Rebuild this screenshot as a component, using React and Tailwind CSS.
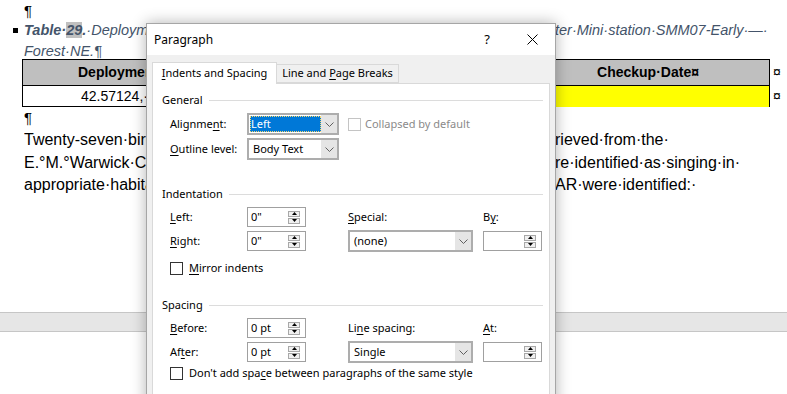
import React from 'react';

// underline the access key letter
const AK = ({ text, k }) => (
  <span>
    {text.slice(0, k)}
    <span className="underline underline-offset-2">{text[k]}</span>
    {text.slice(k + 1)}
  </span>
);

const Chevron = () => (
  <svg width="9" height="5" viewBox="0 0 9 5">
    <path d="M0.5 0.5 L4.5 4.5 L8.5 0.5" fill="none" stroke="#606060" strokeWidth="1" />
  </svg>
);

const Select = ({ value, width, focused }) => (
  <div className={`flex h-[22px] border-2 border-[#adadad] bg-white ${width}`}>
    <div className="flex flex-1 items-center pl-px">
      {focused ? (
        <div className="flex h-[16px] w-full items-center bg-[#0078d7] pl-[1px] text-white outline-1 outline-dotted outline-[#f5d76e] -outline-offset-1">
          {value}
        </div>
      ) : (
        <span className="pl-[3px]">{value}</span>
      )}
    </div>
    <div className="flex w-[16px] items-center justify-center bg-[#e5e5e5]">
      <Chevron />
    </div>
  </div>
);

const Tri = ({ up }) => (
  <svg width="5" height="3" viewBox="0 0 5 3">
    <path d={up ? 'M0 3 L2.5 0 L5 3 Z' : 'M0 0 L2.5 3 L5 0 Z'} fill="#000" />
  </svg>
);

const Spinner = ({ value }) => (
  <div className="flex h-[20px] w-[59px] items-center border border-[#a0a0a0] bg-white">
    <span className="flex-1 pl-[3px]">{value}</span>
    <div className="mr-[5px] flex w-[12px] flex-col gap-px">
      <div className="flex h-[6px] items-center justify-center border border-[#a8a8a8] bg-[#f0f0f0]">
        <Tri up />
      </div>
      <div className="flex h-[6px] items-center justify-center border border-[#a8a8a8] bg-[#f0f0f0]">
        <Tri />
      </div>
    </div>
  </div>
);

const Check = ({ disabled }) => (
  <div
    className={`h-[13px] w-[13px] border bg-white ${disabled ? 'border-[#c4c4c4]' : 'border-[#333333]'}`}
  />
);

const Group = ({ title, className }) => (
  <div className={`ml-[9px] mr-[6px] flex h-[16px] items-center ${className}`}>
    <span>{title}</span>
    <div className="ml-[6px] h-px flex-1 bg-[#dcdcdc]" />
  </div>
);

const Label = ({ children, w = 'w-[77px]' }) => <div className={w}>{children}</div>;

function Dialog() {
  return (
    <div className="absolute left-[146px] top-[23px] flex h-[390px] w-[410px] flex-col border border-[#a6a6a6] bg-[#f0f0f0] font-['Segoe_UI','Noto_Sans',sans-serif] text-[11px] text-black shadow-[0_0_14px_rgba(0,0,0,0.3)]">
      {/* title bar */}
      <div className="flex h-[31px] items-center bg-white pl-[7px] text-[12px]">
        <span className="flex-1">Paragraph</span>
        <span className="mr-[37px] text-[13px]">?</span>
        <svg width="11" height="11" viewBox="0 0 11 11" className="mr-[17px]">
          <path d="M0.5 0.5 L10.5 10.5 M10.5 0.5 L0.5 10.5" stroke="#000" strokeWidth="1" />
        </svg>
      </div>

      <div className="flex flex-1 flex-col px-[5px] pt-[7px]">
        {/* tabs */}
        <div className="flex items-start">
          <div className="relative z-10 -mb-px flex h-[22px] w-[125px] items-center justify-center border border-b-0 border-[#d9d9d9] bg-white">
            <AK text="Indents and Spacing" k={0} />
          </div>
          <div className="mt-[2px] flex h-[19px] w-[122px] items-center justify-center border border-l-0 border-[#d9d9d9] bg-[#f0f0f0]">
            <AK text="Line and Page Breaks" k={9} />
          </div>
        </div>

        {/* panel */}
        <div className="w-[398px] flex-1 border border-[#d9d9d9] bg-white pt-[8px]">
          <Group title="General" />
          <div className="mt-[5px] flex h-[22px] items-center pl-[17px]">
            <Label>
              <AK text="Alignment:" k={7} />
            </Label>
            <Select value="Left" width="w-[92px]" focused />
            <div className="ml-[9px]">
              <Check disabled />
            </div>
            <span className="ml-[4px] text-[#8a8a8a]">Collapsed by default</span>
          </div>
          <div className="mt-[3px] flex h-[22px] items-center pl-[17px]">
            <Label>
              <AK text="Outline level:" k={0} />
            </Label>
            <Select value="Body Text" width="w-[92px]" />
          </div>

          <Group title="Indentation" className="mt-[26px]" />
          <div className="mt-[5px] flex h-[20px] items-center pl-[17px]">
            <Label>
              <AK text="Left:" k={0} />
            </Label>
            <Spinner value={'0"'} />
            <div className="ml-[42px] w-[135px]">
              <AK text="Special:" k={0} />
            </div>
            <AK text="By:" k={1} />
          </div>
          <div className="mt-[3px] flex h-[22px] items-center pl-[17px]">
            <Label>
              <AK text="Right:" k={0} />
            </Label>
            <Spinner value={'0"'} />
            <div className="ml-[42px]">
              <Select value="(none)" width="w-[125px]" />
            </div>
            <div className="ml-[10px]">
              <Spinner value="" />
            </div>
          </div>
          <div className="mt-[9px] flex h-[14px] items-center pl-[17px]">
            <Check />
            <span className="ml-[6px]">
              <AK text="Mirror indents" k={0} />
            </span>
          </div>

          <Group title="Spacing" className="mt-[22px]" />
          <div className="mt-[5px] flex h-[20px] items-center pl-[17px]">
            <Label>
              <AK text="Before:" k={0} />
            </Label>
            <Spinner value="0 pt" />
            <div className="ml-[42px] w-[135px]">
              <AK text="Line spacing:" k={2} />
            </div>
            <AK text="At:" k={0} />
          </div>
          <div className="mt-[3px] flex h-[22px] items-center pl-[17px]">
            <Label>
              <AK text="After:" k={2} />
            </Label>
            <Spinner value="0 pt" />
            <div className="ml-[42px]">
              <Select value="Single" width="w-[125px]" />
            </div>
            <div className="ml-[10px]">
              <Spinner value="" />
            </div>
          </div>
          <div className="mt-[3px] flex h-[14px] items-center pl-[17px]">
            <Check />
            <span className="ml-[6px]">
              <AK text="Don't add space between paragraphs of the same style" k={13} />
            </span>
          </div>
        </div>
      </div>
    </div>
  );
}

// a text line split around the dialog: left part clipped at the dialog's edge, right part after it
const SplitLine = ({ left, right, leftW = 'w-[122px]', className }) => (
  <div className={`flex whitespace-nowrap ${className}`}>
    <div className="w-[531px]">
      <div className={`${leftW} overflow-hidden`}>{left}</div>
    </div>
    <div>{right}</div>
  </div>
);

function Document() {
  return (
    <div className="font-['Liberation_Sans',Arial,sans-serif] text-black">
      <div className="h-[20px] pl-[24px] pt-px text-[15px] leading-[20px]">¶</div>

      {/* caption */}
      <div className="flex h-[21px] items-center text-[14.5px] italic text-[#44546a]">
        <div className="ml-[13px] mr-[6px] h-[5px] w-[5px] bg-black" />
        <SplitLine
          left={
            <span>
              <b>
                Table·<span className="bg-[#c0c0c0]">29</span>.
              </b>
              ·Deployment·locations·for·Songme
            </span>
          }
          right="ter·Mini·station·SMM07-Early·—·"
        />
      </div>
      <div className="h-[18px] pl-[24px] text-[14.5px] italic leading-[20px] text-[#44546a]">
        Forest·NE.¶
      </div>

      {/* table */}
      <div className="ml-[22px] flex">
        <div className="w-[748px] border border-black text-[14px]">
          <div className="grid h-[26px] grid-cols-[250px_254px_1fr] border-b border-black bg-[#bfbfbf] font-bold">
            <div className="flex items-center border-r border-black">
              <div className="w-[123px] overflow-hidden whitespace-nowrap pl-[55px]">Deployment·Location¤</div>
            </div>
            <div className="border-r border-black" />
            <div className="flex items-center justify-center">Checkup·Date¤</div>
          </div>
          <div className="grid h-[20px] grid-cols-[250px_254px_1fr]">
            <div className="flex items-center border-r border-black">
              <div className="w-[123px] overflow-hidden whitespace-nowrap pl-[58px]">42.57124,·-72.22866¤</div>
            </div>
            <div className="border-r border-black" />
            <div className="bg-[#ffff00]" />
          </div>
        </div>
        <div className="pl-[3px] text-[14px]">
          <div className="flex h-[27px] items-center">¤</div>
          <div className="flex h-[21px] items-center">¤</div>
        </div>
      </div>

      <div className="h-[22px] pl-[24px] text-[15px] leading-[22px]">¶</div>

      {/* body */}
      <div className="pl-[24px] text-[16px] leading-[22.5px]">
        <SplitLine left="Twenty-seven·birds·were·detected" right="rieved·from·the·" />
        <SplitLine left="E.°M.°Warwick·Community" right="re·identified·as·singing·in·" />
        <SplitLine left="appropriate·habitat·for" right="AR·were·identified:·" />
      </div>

      {/* page break band */}
      <div className="mt-[115px] h-[20px] border-y border-[#c6c6c6] bg-[#e6e6e6]" />
    </div>
  );
}

export default function App() {
  return (
    <div className="relative h-[394px] w-[787px] overflow-hidden bg-white">
      <Document />
      <Dialog />
    </div>
  );
}
